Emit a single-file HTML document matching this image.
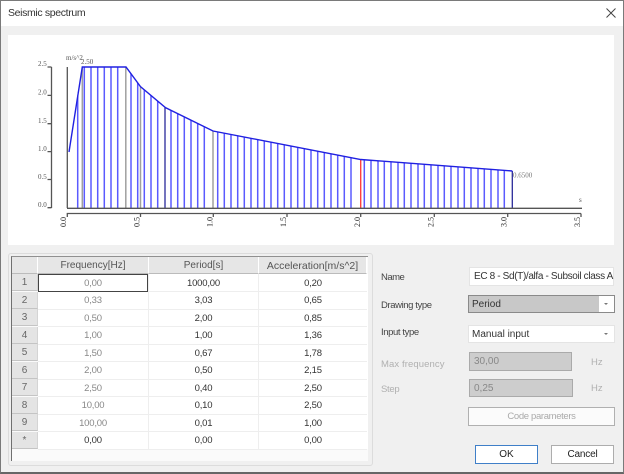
<!DOCTYPE html>
<html><head><meta charset="utf-8"><style>
html,body{margin:0;padding:0}
body{width:624px;height:474px;position:relative;overflow:hidden;background:#f0f0f0;font-family:"Liberation Sans",sans-serif;font-size:10px;color:#333;filter:blur(.3px)}
.a{position:absolute;box-sizing:border-box}
.t{position:absolute;white-space:nowrap;line-height:14px}
.c{position:absolute;text-align:center;line-height:17px;height:17px;white-space:nowrap;font-size:9.5px;letter-spacing:-.2px}
.h{position:absolute;box-sizing:border-box;background:#e6e6e6;border-right:1px solid #fff;border-bottom:1px solid #bbb;text-align:center;color:#555;line-height:18px}
.r{position:absolute;left:12px;width:26px;box-sizing:border-box;background:#e4e4e4;border-bottom:1px solid #c4c4c4;border-right:1px solid #d4d4d4;text-align:center;color:#666;height:17.35px;line-height:18px}
.hl{position:absolute;left:38px;width:329px;height:1px;background:#eee}
.g{color:#888}
.lb{color:#444;font-size:9.5px}
.dis{color:#b0b0b0;font-size:9.5px}
</style></head><body>
<div class="a" style="left:0;top:0;width:624px;height:474px;border:1px solid #7a7a7a;border-bottom:2px solid #666"></div>
<div class="a" style="left:1px;top:1px;width:622px;height:25px;background:#fff"></div>
<div class="t" style="left:8px;top:6px;font-size:10.5px;letter-spacing:-.35px;color:#333">Seismic spectrum</div>
<svg class="a" style="left:605px;top:7px" width="12" height="12" viewBox="0 0 12 12"><path d="M1.5 1.5L10.5 10.5M10.5 1.5L1.5 10.5" stroke="#444" stroke-width="1" fill="none"/></svg>

<div class="a" style="left:8px;top:35px;width:606px;height:210px;background:#fff"></div>
<svg class="a" style="left:0;top:0" width="624" height="250" viewBox="0 0 624 250">
<defs><clipPath id="k"><polygon points="67.3,152 82.3,67 126,67 140.5,86.7 165.5,107.6 213,131 360.7,159.5 512.3,171 512.3,208 67.3,208"/></clipPath></defs>
<path clip-path="url(#k)" stroke="#5a5aff" stroke-width="1.5" fill="none" d="M77.7 60V208M84.3 60V208M91 60V208M97.7 60V208M104.3 60V208M111 60V208M117.7 60V208M131 60V208M137.7 60V208M144.3 60V208M151 60V208M157.7 60V208M171 60V208M177.7 60V208M184.3 60V208M191 60V208M197.7 60V208M204.3 60V208M217.7 60V208M224.3 60V208M231 60V208M237.7 60V208M244.3 60V208M251 60V208M257.7 60V208M264.3 60V208M271 60V208M277.7 60V208M284.3 60V208M291 60V208M297.7 60V208M304.3 60V208M311 60V208M317.7 60V208M324.3 60V208M331 60V208M337.7 60V208M344.3 60V208M351 60V208M364.3 60V208M371 60V208M378 60V208M384.3 60V208M391 60V208M398 60V208M404.3 60V208M411 60V208M418 60V208M424.3 60V208M431 60V208M438 60V208M444.3 60V208M451 60V208M458 60V208M464.3 60V208M471 60V208M478 60V208M484.3 60V208M491 60V208M498 60V208M504.3 60V208"/>
<path clip-path="url(#k)" stroke="#a0a0a0" stroke-width="1.5" fill="none" d="M82.3 60V208M125.8 60V208M140.5 60V208M213 60V208"/>
<path stroke="#ff4040" stroke-width="1.4" fill="none" d="M360.7 159.5V208"/>
<path stroke="#2a2a9a" stroke-width="1.3" fill="none" d="M165 107.6V208M512.3 171V208"/>
<path stroke="#555" stroke-width="1.3" fill="none" d="M67.3 67V208M67 208.3H582M51.5 67V208M47.5 67H51.5M47.5 95.4H51.5M47.5 123.7H51.5M47.5 151.6H51.5M47.5 179.5H51.5M47.5 207.7H51.5M67.3 217V213.5H581M140.5 213.5V217M213.3 213.5V217M287 213.5V217M360.7 213.5V217M434.3 213.5V217M507.7 213.5V217M581 213.5V217"/>
<polyline fill="none" stroke="#2020e0" stroke-width="1.4" points="69,152 82.3,67 126,67 140.5,86.7 165.5,107.6 213,131 360.7,159.5 512.3,171"/>
<g font-family="Liberation Serif" font-size="7" fill="#555">
<text x="38" y="66">2.5</text><text x="38" y="94.5">2.0</text><text x="38" y="123">1.5</text><text x="38" y="151">1.0</text><text x="38" y="179">0.5</text><text x="38" y="207">0.0</text>
<text x="66" y="60">m/s^2</text><text x="81" y="64">2.50</text><text x="513" y="177.5" fill="#777">0.6500</text><text x="579" y="202">s</text>
<text transform="translate(66,227) rotate(-90)" font-size="8" fill="#222">0.0</text>
<text transform="translate(139.5,227) rotate(-90)" font-size="8" fill="#222">0.5</text>
<text transform="translate(212.5,227) rotate(-90)" font-size="8" fill="#222">1.0</text>
<text transform="translate(286,227) rotate(-90)" font-size="8" fill="#222">1.5</text>
<text transform="translate(360,227) rotate(-90)" font-size="8" fill="#222">2.0</text>
<text transform="translate(433.5,227) rotate(-90)" font-size="8" fill="#222">2.5</text>
<text transform="translate(506.5,227) rotate(-90)" font-size="8" fill="#222">3.0</text>
<text transform="translate(580,227) rotate(-90)" font-size="8" fill="#222">3.5</text>
</g>
</svg>

<div class="a" style="left:8px;top:253px;width:365px;height:213px;border:1px solid #dcdcdc;border-radius:3px"></div>
<div class="a" style="left:11px;top:256px;width:357px;height:205px;background:#fafafa;border-left:1.5px solid #707070;border-top:1.5px solid #909090"></div>
<div class="a" style="left:38px;top:274px;width:330px;height:175px;background:#fff"></div>

<div class="h" style="left:12px;top:257px;width:26px;height:17px"></div>
<div class="h" style="left:38px;top:257px;width:111px;height:17px">Frequency[Hz]</div>
<div class="h" style="left:149px;top:257px;width:110px;height:17px">Period[s]</div>
<div class="h" style="left:259px;top:257px;width:108px;height:17px;font-size:10.5px">Acceleration[m/s^2]</div>

<div class="a" style="left:148px;top:274px;width:1px;height:175px;background:#eee"></div>
<div class="a" style="left:258px;top:274px;width:1px;height:175px;background:#eee"></div>
<div class="hl" style="top:291px"></div><div class="hl" style="top:309px"></div><div class="hl" style="top:326px"></div><div class="hl" style="top:344px"></div><div class="hl" style="top:361px"></div><div class="hl" style="top:379px"></div><div class="hl" style="top:396px"></div><div class="hl" style="top:414px"></div><div class="hl" style="top:431px"></div><div class="hl" style="top:449px"></div>
<div class="a" style="left:38px;top:274px;width:110px;height:18px;border:1px solid #444"></div>

<div class="r" style="top:274px">1</div><div class="r" style="top:291.5px">2</div><div class="r" style="top:309px">3</div><div class="r" style="top:326.5px">4</div><div class="r" style="top:344px">5</div><div class="r" style="top:361.5px">6</div><div class="r" style="top:379px">7</div><div class="r" style="top:396.5px">8</div><div class="r" style="top:414px">9</div><div class="r" style="top:431.5px">*</div>

<div class="c g" style="left:38px;width:110px;top:274.5px">0,00</div><div class="c" style="left:149px;width:109px;top:274.5px">1000,00</div><div class="c" style="left:259px;width:108px;top:274.5px">0,20</div>
<div class="c g" style="left:38px;width:110px;top:292px">0,33</div><div class="c" style="left:149px;width:109px;top:292px">3,03</div><div class="c" style="left:259px;width:108px;top:292px">0,65</div>
<div class="c g" style="left:38px;width:110px;top:309.5px">0,50</div><div class="c" style="left:149px;width:109px;top:309.5px">2,00</div><div class="c" style="left:259px;width:108px;top:309.5px">0,85</div>
<div class="c g" style="left:38px;width:110px;top:327px">1,00</div><div class="c" style="left:149px;width:109px;top:327px">1,00</div><div class="c" style="left:259px;width:108px;top:327px">1,36</div>
<div class="c g" style="left:38px;width:110px;top:344.5px">1,50</div><div class="c" style="left:149px;width:109px;top:344.5px">0,67</div><div class="c" style="left:259px;width:108px;top:344.5px">1,78</div>
<div class="c g" style="left:38px;width:110px;top:362px">2,00</div><div class="c" style="left:149px;width:109px;top:362px">0,50</div><div class="c" style="left:259px;width:108px;top:362px">2,15</div>
<div class="c g" style="left:38px;width:110px;top:379.5px">2,50</div><div class="c" style="left:149px;width:109px;top:379.5px">0,40</div><div class="c" style="left:259px;width:108px;top:379.5px">2,50</div>
<div class="c g" style="left:38px;width:110px;top:397px">10,00</div><div class="c" style="left:149px;width:109px;top:397px">0,10</div><div class="c" style="left:259px;width:108px;top:397px">2,50</div>
<div class="c g" style="left:38px;width:110px;top:414.5px">100,00</div><div class="c" style="left:149px;width:109px;top:414.5px">0,01</div><div class="c" style="left:259px;width:108px;top:414.5px">1,00</div>
<div class="c" style="left:38px;width:110px;top:432px">0,00</div><div class="c" style="left:149px;width:109px;top:432px">0,00</div><div class="c" style="left:259px;width:108px;top:432px">0,00</div>

<div class="t lb" style="left:381px;top:271px;letter-spacing:-.5px">Name</div>
<div class="t lb" style="left:381px;top:299px;letter-spacing:-.4px">Drawing type</div>
<div class="t lb" style="left:381px;top:326px;letter-spacing:-.4px">Input type</div>
<div class="t dis" style="left:381px;top:358px;letter-spacing:.1px">Max frequency</div>
<div class="t dis" style="left:381px;top:383px;letter-spacing:-.3px">Step</div>
<div class="t dis" style="left:591px;top:356px">Hz</div>
<div class="t dis" style="left:591px;top:382px">Hz</div>

<div class="a" style="left:469px;top:267px;width:145px;height:19px;background:#fff;border:1px solid #e4e4e4"></div>
<div class="t" style="left:474px;top:270px;letter-spacing:-.35px">EC 8 - Sd(T)/alfa - Subsoil class A</div>

<div class="a" style="left:468px;top:295px;width:147px;height:18px;background:#fff;border:1px solid #8a8a8a"></div>
<div class="a" style="left:469px;top:296px;width:130px;height:16px;background:#c8c8c8"></div>
<div class="t" style="left:472px;top:298px">Period</div>
<div class="a" style="left:604px;top:303px;border-left:2.5px solid transparent;border-right:2.5px solid transparent;border-top:2.5px solid #777"></div>

<div class="a" style="left:468px;top:325px;width:147px;height:18px;background:#fff;border:1px solid #e4e4e4"></div>
<div class="t" style="left:472px;top:328px">Manual input</div>
<div class="a" style="left:604px;top:333px;border-left:2.5px solid transparent;border-right:2.5px solid transparent;border-top:2.5px solid #777"></div>

<div class="a" style="left:469px;top:352px;width:103px;height:19px;background:#cdcdcd;border:1px solid #aaa"></div>
<div class="t" style="left:474px;top:355px;color:#888">30,00</div>
<div class="a" style="left:469px;top:379px;width:104px;height:18px;background:#cdcdcd;border:1px solid #aaa"></div>
<div class="t" style="left:474px;top:382px;color:#888">0,25</div>

<div class="a" style="left:468px;top:407px;width:147px;height:19px;background:#fbfbfb;border:1px solid #b0b0b0;text-align:center;color:#aaa;line-height:17px;font-size:9.5px;letter-spacing:-.35px">Code parameters</div>
<div class="a" style="left:475px;top:445px;width:63px;height:19px;background:#fff;border:1.5px solid #3f7fc8;text-align:center;color:#222;line-height:18px">OK</div>
<div class="a" style="left:551px;top:445px;width:63px;height:19px;background:#fff;border:1px solid #adadad;text-align:center;color:#222;line-height:18px;letter-spacing:-.2px">Cancel</div>
</body></html>
